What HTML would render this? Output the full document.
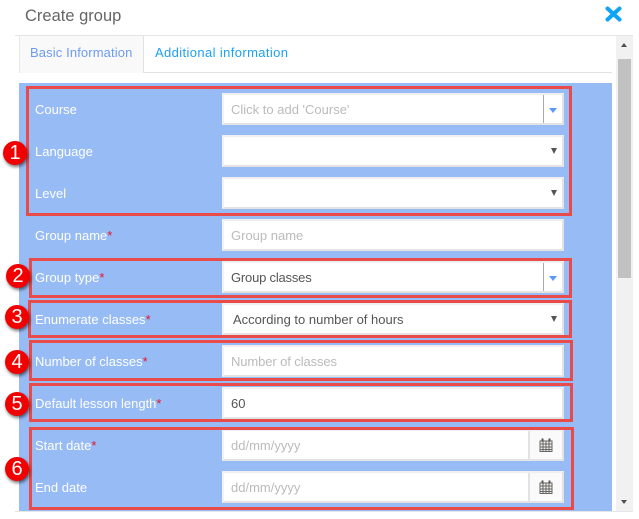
<!DOCTYPE html>
<html>
<head>
<meta charset="utf-8">
<style>
html,body{margin:0;padding:0;width:639px;height:519px;overflow:hidden;background:#fff;font-family:"Liberation Sans",sans-serif}
.a{position:absolute;box-sizing:border-box}
.lbl{position:absolute;left:35px;color:#fff;font-size:13px;line-height:18px;white-space:nowrap}
.lbl b{color:#e8132e;font-weight:normal}
.in{position:absolute;left:222px;width:342px;height:32px;box-sizing:border-box;background:#fff;border:2px solid #e3e3e3;border-top-color:#efefef;border-left-color:#f3f3f3;font-size:13px;line-height:30px;padding-left:7px;color:#555;white-space:nowrap}
.ph{color:#bbb}
.sep{position:absolute;right:18px;top:0;bottom:0;width:1px;background:#aaa}
.bt{position:absolute;right:5px;top:13px;width:0;height:0;border-left:4px solid transparent;border-right:4px solid transparent;border-top:5px solid #5b9af0}
.dt{position:absolute;right:5px;top:11px;width:0;height:0;border-left:3px solid transparent;border-right:3px solid transparent;border-top:6px solid #555}
.cal{position:absolute;right:0;top:0;bottom:0;width:34px;background:#fafafa;border-left:2px solid #e3e3e3;box-sizing:border-box}
.cal svg{position:absolute;left:9px;top:7px}
.red{position:absolute;box-sizing:border-box;border:3px solid #e94a4a}
.bd{position:absolute;width:24px;height:24px;border-radius:50%;background:#f20000;color:#fff;font-size:20px;line-height:24px;text-align:center;box-shadow:1px 2px 3px rgba(0,0,0,.55)}
</style>
</head>
<body>
<div class="a" style="left:25px;top:5px;font-size:16.5px;line-height:22px;color:#666">Create group</div>
<svg class="a" style="left:605px;top:6px" width="17" height="16" viewBox="0 0 17 16"><path d="M2.5 2.5L14.5 13.5M14.5 2.5L2.5 13.5" stroke="#0ea5f5" stroke-width="4" stroke-linecap="round"/></svg>
<div class="a" style="left:15px;top:35px;width:618px;height:1px;background:#e5e5e5"></div>
<div class="a" style="left:19px;top:36px;width:125px;height:37px;background:#f9f9f9;border-right:1px solid #e2e2e2;border-left:1px solid #e8e8e8"></div>
<div class="a" style="left:30px;top:44px;font-size:13px;letter-spacing:.12px;line-height:18px;color:#6d9bf2">Basic Information</div>
<div class="a" style="left:155px;top:44px;font-size:13px;letter-spacing:.38px;line-height:18px;color:#1ea1f2">Additional information</div>
<div class="a" style="left:144px;top:72px;width:468px;height:1px;background:#e2e2e2"></div>

<div class="a" style="left:19px;top:83px;width:593px;height:428px;background:#97bbf5"></div>
<div class="a" style="left:15px;top:511px;width:618px;height:1px;background:#e5e5e5"></div>

<div class="a" style="left:616px;top:36px;width:17px;height:475px;background:#f1f1f1"></div>
<div class="a" style="left:618px;top:59px;width:13px;height:219px;background:#c1c1c1"></div>
<div class="a" style="left:621px;top:43px;width:0;height:0;border-left:3.5px solid transparent;border-right:3.5px solid transparent;border-bottom:4px solid #505050"></div>
<div class="a" style="left:621px;top:500px;width:0;height:0;border-left:3.5px solid transparent;border-right:3.5px solid transparent;border-top:4px solid #505050"></div>

<div class="lbl" style="top:101px">Course</div>
<div class="lbl" style="top:143px">Language</div>
<div class="lbl" style="top:185px">Level</div>
<div class="lbl" style="top:227px">Group name<b>*</b></div>
<div class="lbl" style="top:269px">Group type<b>*</b></div>
<div class="lbl" style="top:311px">Enumerate classes<b>*</b></div>
<div class="lbl" style="top:353px">Number of classes<b>*</b></div>
<div class="lbl" style="top:395px">Default lesson length<b>*</b></div>
<div class="lbl" style="top:437px">Start date<b>*</b></div>
<div class="lbl" style="top:479px">End date</div>

<div class="in ph" style="top:93px">Click to add 'Course'<span class="sep"></span><span class="bt"></span></div>
<div class="in" style="top:135px"><span class="dt"></span></div>
<div class="in" style="top:177px"><span class="dt"></span></div>
<div class="in ph" style="top:219px">Group name</div>
<div class="in" style="top:261px"><span style="letter-spacing:-.2px">Group classes</span><span class="sep"></span><span class="bt"></span></div>
<div class="in" style="top:303px;padding-left:9px">According to number of hours<span class="dt"></span></div>
<div class="in ph" style="top:345px"><span style="letter-spacing:-.1px">Number of classes</span></div>
<div class="in" style="top:387px">60</div>
<div class="in ph" style="top:429px">dd/mm/yyyy<span class="cal"><svg width="14" height="14" viewBox="0 0 14 14"><path d="M1 3H13V13.5H1ZM1 6H13M1 9H13M1 11.5H13M4 3V13.5M7 3V13.5M10 3V13.5" fill="#f4f0ea" stroke="#666" stroke-width="1"/><path d="M3.5 .5V3.5M10.5 .5V3.5" stroke="#555" stroke-width="2"/></svg></span></div>
<div class="in ph" style="top:471px">dd/mm/yyyy<span class="cal"><svg width="14" height="14" viewBox="0 0 14 14"><path d="M1 3H13V13.5H1ZM1 6H13M1 9H13M1 11.5H13M4 3V13.5M7 3V13.5M10 3V13.5" fill="#f4f0ea" stroke="#666" stroke-width="1"/><path d="M3.5 .5V3.5M10.5 .5V3.5" stroke="#555" stroke-width="2"/></svg></span></div>

<div class="red" style="left:26px;top:86px;width:546px;height:130px"></div>
<div class="red" style="left:29px;top:258px;width:543px;height:40px"></div>
<div class="red" style="left:28px;top:300px;width:544px;height:38px"></div>
<div class="red" style="left:29px;top:340px;width:544px;height:41px"></div>
<div class="red" style="left:29px;top:383px;width:544px;height:39px"></div>
<div class="red" style="left:29px;top:427px;width:545px;height:83px"></div>

<div class="bd" style="left:3px;top:141px">1</div>
<div class="bd" style="left:6px;top:264px">2</div>
<div class="bd" style="left:5px;top:305px">3</div>
<div class="bd" style="left:5px;top:350px">4</div>
<div class="bd" style="left:5px;top:392px">5</div>
<div class="bd" style="left:5px;top:457px">6</div>
</body>
</html>
